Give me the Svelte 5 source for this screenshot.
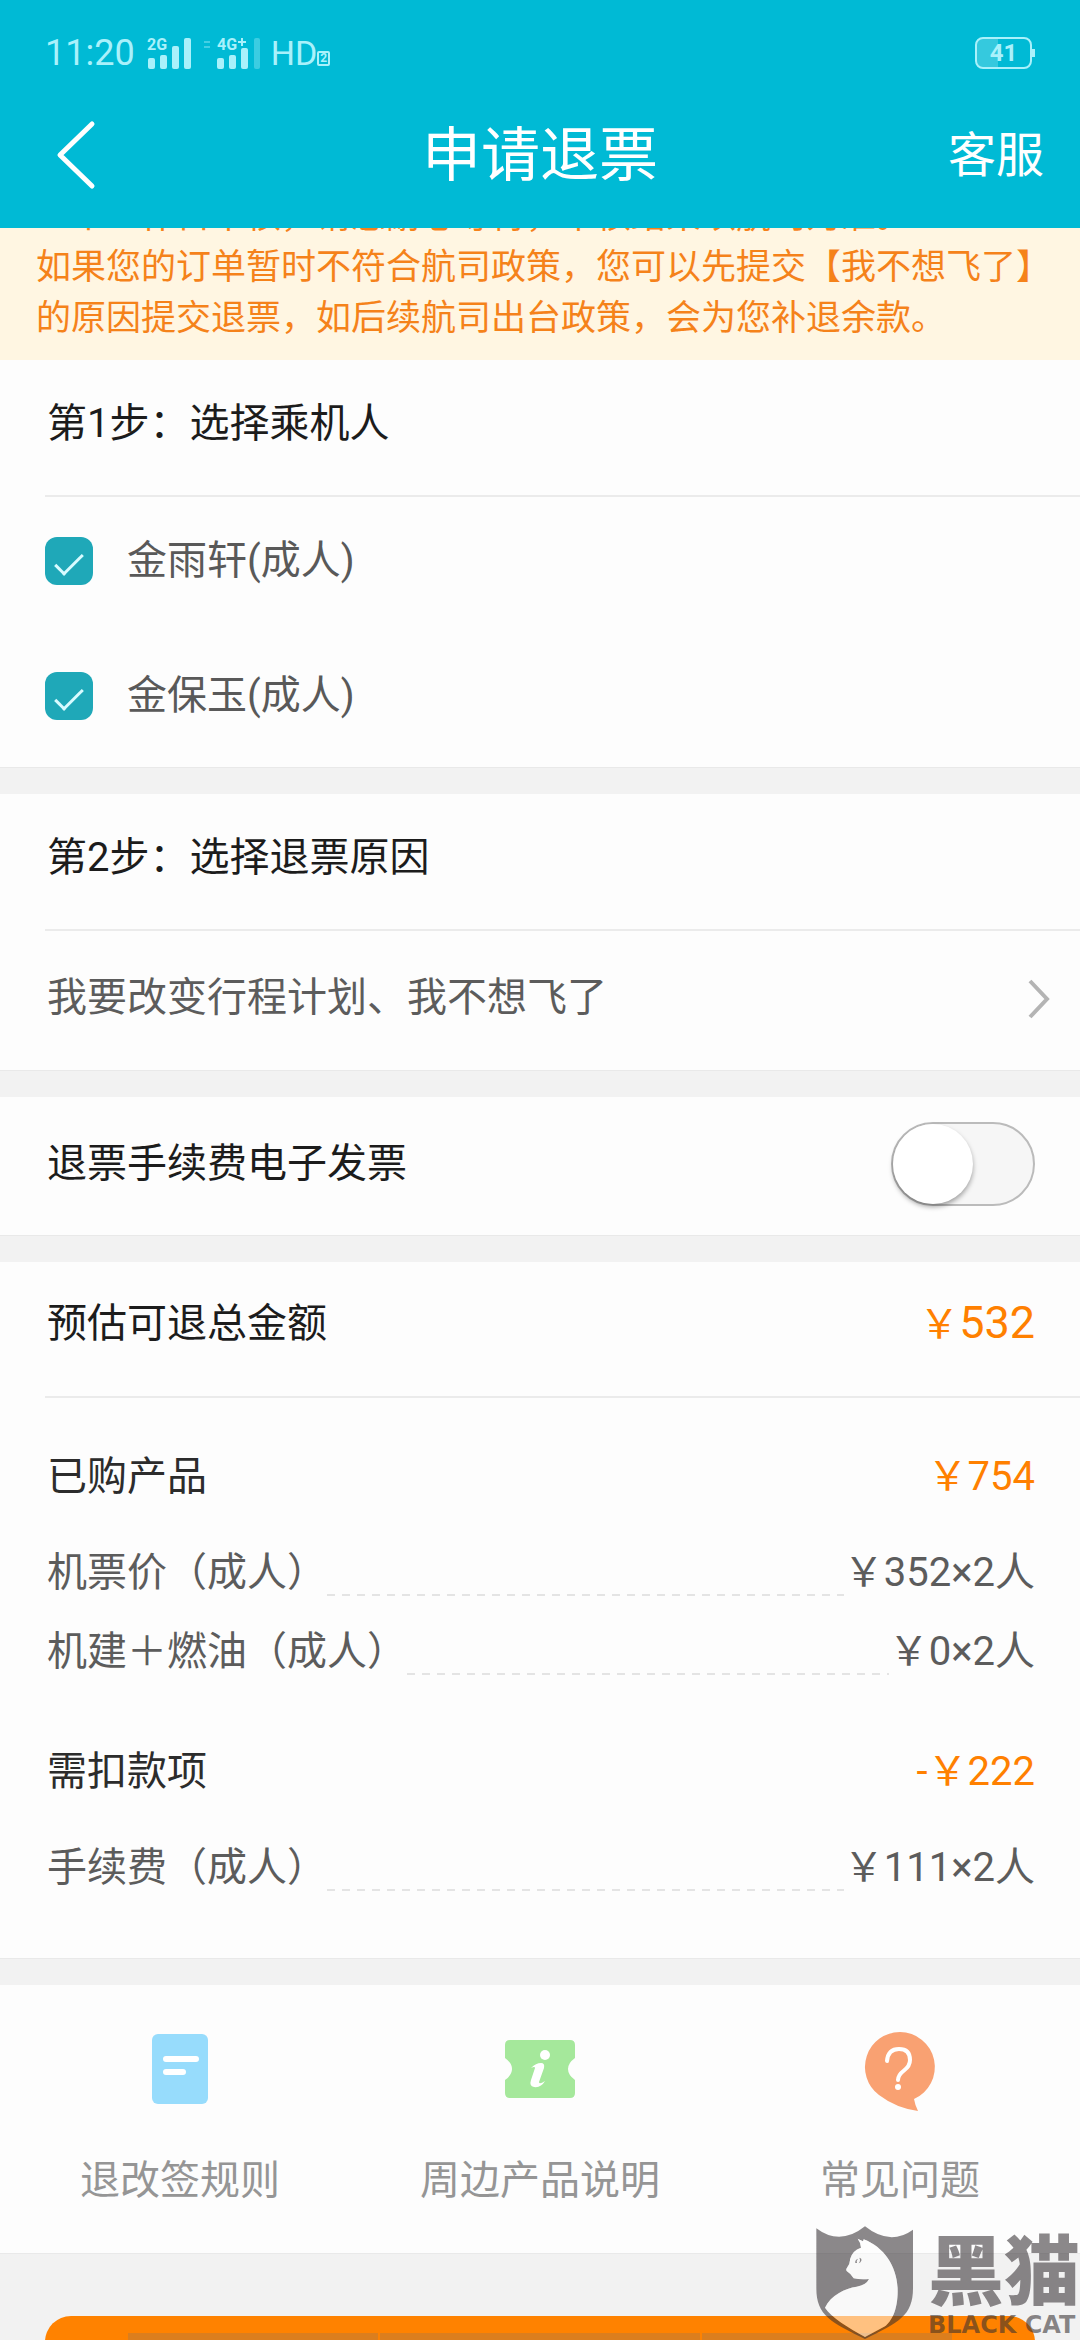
<script>
  let passengers = $state([
    { id: 'p1', name: '金雨轩(成人)', checked: true },
    { id: 'p2', name: '金保玉(成人)', checked: true }
  ]);
  let needInvoice = $state(false);

  const reason = '我要改变行程计划、我不想飞了';

  const groups = [
    {
      title: '已购产品',
      sign: '',
      total: 754,
      items: [
        { label: '机票价（成人）', price: 352, count: 2 },
        { label: '机建＋燃油（成人）', price: 0, count: 2 }
      ]
    },
    {
      title: '需扣款项',
      sign: '-',
      total: 222,
      items: [{ label: '手续费（成人）', price: 111, count: 2 }]
    }
  ];
</script>

<div class="page">
  <header class="header">
    <div class="status">
      <span class="time">11:20</span>
      <svg class="signal" width="46" height="34" viewBox="0 0 46 34" fill="currentColor">
        <text x="0" y="14" class="net">2G</text>
        <rect x="1" y="22" width="7" height="11" rx="2" />
        <rect x="13" y="19" width="7" height="14" rx="2" />
        <rect x="25" y="10" width="7" height="23" rx="2" />
        <rect x="37" y="2" width="7" height="31" rx="2" />
      </svg>
      <svg class="signal" width="58" height="34" viewBox="0 0 58 34" fill="currentColor">
        <rect x="1" y="5" width="6" height="2" opacity="0.4" />
        <rect x="1" y="10" width="6" height="2" opacity="0.4" />
        <text x="14" y="14" class="net">4G</text>
        <path d="M38 2h2v3h3v2h-3v3h-2v-3h-3v-2h3z" />
        <rect x="14" y="22" width="7" height="11" rx="2" />
        <rect x="26" y="19" width="7" height="14" rx="2" />
        <rect x="38" y="12" width="7" height="21" rx="2" />
        <rect x="51" y="2" width="6" height="31" rx="2" opacity="0.35" />
      </svg>
      <span class="hd">HD<span class="sim">2</span></span>
      <span class="battery">41</span>
    </div>
    <nav class="nav">
      <button class="back" aria-label="返回">
        <svg width="46" height="72" viewBox="0 0 46 72" fill="none" stroke="currentColor" stroke-width="5" stroke-linecap="round" stroke-linejoin="round">
          <path d="M39 4 L7 35 L39 66" />
        </svg>
      </button>
      <h1>申请退票</h1>
      <a class="service" href="#service">客服</a>
    </nav>
  </header>

  <main>
    <div class="notice">
      <p>一个工作日审核，请您耐心等待，审核结果以航司为准。</p>
      <p>如果您的订单暂时不符合航司政策，您可以先提交【我不想飞了】的原因提交退票，如后续航司出台政策，会为您补退余款。</p>
    </div>

    <section>
      <h2 class="row">第1步：选择乘机人</h2>
      <hr />
      {#each passengers as p (p.id)}
        <label class="row passenger">
          <input type="checkbox" class="check" bind:checked={p.checked} />
          <span>{p.name}</span>
        </label>
      {/each}
    </section>

    <section>
      <h2 class="row">第2步：选择退票原因</h2>
      <hr />
      <button class="row reason">
        <span>{reason}</span>
        <svg width="26" height="42" viewBox="0 0 26 42" fill="none" stroke="#b4b4b4" stroke-width="4">
          <path d="M4 4 L21 22 L4 40" />
        </svg>
      </button>
    </section>

    <section>
      <label class="invoice">
        <span>退票手续费电子发票</span>
        <input type="checkbox" role="switch" class="switch" bind:checked={needInvoice} />
      </label>
    </section>

    <section>
      <div class="row total">
        <h2>预估可退总金额</h2>
        <span class="amount">￥<span class="big">532</span></span>
      </div>
      <hr />
      <div class="detail">
        {#each groups as g}
          <div class="group">
            <div class="line head">
              <h3>{g.title}</h3>
              <span class="amount">{g.sign}￥{g.total}</span>
            </div>
            <div class="items">
              {#each g.items as item}
                <div class="line">
                  <span>{item.label}</span>
                  <i class="dash"></i>
                  <span>￥{item.price}×{item.count}人</span>
                </div>
              {/each}
            </div>
          </div>
        {/each}
      </div>
    </section>

    <section class="links">
      <a href="#rules">
        <svg width="84" height="84" viewBox="0 0 84 84">
          <rect x="14" y="7" width="56" height="70" rx="6" fill="#97dcfc" />
          <path d="M28 32h30M28 45h17" stroke="#fff" stroke-width="6" stroke-linecap="round" />
        </svg>
        <span>退改签规则</span>
      </a>
      <a href="#products">
        <svg width="84" height="84" viewBox="0 0 84 84">
          <path d="M12 13h60q5 0 5 5v13q-7 5-7 11t7 11v13q0 5-5 5H12q-5 0-5-5V53q7-5 7-11T7 31V18q0-5 5-5z" fill="#a5e89b" />
          <circle cx="47" cy="28" r="5" fill="#fff" />
          <path d="M33 41q5-5 10-5q4 0 3 5l-5 14q0 3 6-1q-4 7-11 6q-5-1-3-7l4-12q0-2-4 0z" fill="#fff" />
        </svg>
        <span>周边产品说明</span>
      </a>
      <a href="#faq">
        <svg width="84" height="84" viewBox="0 0 84 84">
          <path d="M42 5a35 35 0 0 1 14 67q1 6 4 12Q38 81 21 68A35 35 0 0 1 42 5z" fill="#f9a172" />
          <path d="M29 34q1-12 12-12q11 0 11 11q0 6-6 10.500t-6 9.500" fill="none" stroke="#fff" stroke-width="4" stroke-linecap="round" />
          <circle cx="40" cy="60" r="3" fill="#fff" />
        </svg>
        <span>常见问题</span>
      </a>
    </section>

    <button class="submit" aria-label="提交">
      <span class="strip"><i></i><i></i><i></i></span>
    </button>
  </main>

  <div class="watermark">
    <svg width="98" height="114" viewBox="93 75 294 342">
      <path class="shield" fill-rule="evenodd" d="M94 82Q165 136 240 76Q315 136 384 86V262C384 345 340 365 240 414C140 365 94 345 94 262ZM218 113L234 121L236 115C300 140 338 200 338 270C338 330 318 362 300 376L240 408C190 380 140 350 120 320C138 282 180 262 215 257Q244 252 252 234Q225 236 206 232Q200 220 185 210Q182 205 186 200Q196 187 195 175Q202 148 228 140Q228 126 218 113Z" />
      <path fill="#fff" fill-opacity="0.5" d="M218 113L234 121L236 115C300 140 338 200 338 270C338 330 318 362 300 376L240 408C190 380 140 350 120 320C138 282 180 262 215 257Q244 252 252 234Q225 236 206 232Q200 220 185 210Q182 205 186 200Q196 187 195 175Q202 148 228 140Q228 126 218 113Z" />
      <path class="shield" d="M211 186q-2-9 8-13q-6 6-3 13zM221 187q7-8 2-17q8 2 6 9q-3 7-8 8z" />
    </svg>
    <div class="brand">
      <span class="cn">黑猫</span>
      <span class="en">BLACK CAT</span>
    </div>
  </div>
</div>

<style>
  :global(body) {
    margin: 0;
  }

  .page {
    position: relative;
    display: flex;
    flex-direction: column;
    height: 100vh;
    overflow: hidden;
    background: #f2f2f2;
    color: #1c1c1c;
    font-family: Roboto, "Noto Sans CJK SC", sans-serif;
    font-size: 40px;
    line-height: 56px;
  }

  h1, h2, h3, p {
    margin: 0;
    font-size: inherit;
    font-weight: 400;
  }

  button {
    padding: 0;
    border: 0;
    background: none;
    color: inherit;
    font: inherit;
    cursor: pointer;
  }

  a {
    color: inherit;
    text-decoration: none;
  }

  .header {
    flex: none;
    padding: 33px 36px 23px 45px;
    background: #00bad5;
    color: #fff;
  }

  .status {
    display: flex;
    align-items: center;
    height: 40px;
    margin-right: 12px;
    color: #a9f1fb;
    font-size: 36px;
    line-height: 40px;
  }

  .time {
    margin-right: 12px;
  }

  .signal {
    margin-right: 10px;
    overflow: visible;
  }

  .net {
    font-size: 16px;
    font-weight: 700;
  }

  .hd {
    display: flex;
    align-items: center;
    font-size: 34px;
  }

  .sim {
    margin-top: 10px;
    padding: 0 1px;
    border: 2px solid currentColor;
    border-radius: 2px;
    font-size: 12px;
    font-weight: 700;
    line-height: 11px;
  }

  .battery {
    position: relative;
    box-sizing: border-box;
    width: 57px;
    height: 32px;
    margin-left: auto;
    border: 2px solid currentColor;
    border-radius: 8px;
    background: linear-gradient(90deg, #35c9de 40%, transparent 40%);
    font-size: 24px;
    font-weight: 700;
    line-height: 28px;
    text-align: center;
  }

  .battery::after {
    content: '';
    position: absolute;
    top: 10px;
    right: -5px;
    width: 3px;
    height: 8px;
    background: currentColor;
  }

  .nav {
    display: grid;
    grid-template-columns: 1fr auto 1fr;
    align-items: center;
    height: 98px;
    margin-top: 34px;
    margin-left: -9px;
  }

  .back {
    display: flex;
    justify-self: start;
    margin-left: 17px;
  }

  h1 {
    font-size: 59px;
  }

  .service {
    justify-self: end;
    font-size: 48px;
  }

  main {
    flex: 1;
    min-height: 0;
    overflow: hidden;
  }

  .notice {
    margin-top: -37px;
    padding: 0 28px 16px 36px;
    background: #fff6e2;
    color: #f5821a;
    font-size: 35px;
    line-height: 51px;
  }

  section {
    margin-bottom: 26px;
    border-bottom: 1px solid #e9e9e9;
    background: #fdfdfd;
  }

  hr {
    height: 2px;
    margin: 0 0 0 45px;
    border: 0;
    background: #ebebeb;
  }

  .row {
    padding: 36px 45px 43px 47px;
  }

  .passenger {
    display: flex;
    align-items: center;
    padding-left: 45px;
    gap: 34px;
    color: #595959;
  }

  .check {
    appearance: none;
    position: relative;
    width: 48px;
    height: 48px;
    margin: 0;
    border: 2px solid #ccc;
    border-radius: 12px;
  }

  .check:checked {
    border: 0;
    background: #1fa8b8;
  }

  .check:checked::before {
    content: '';
    position: absolute;
    top: 10px;
    left: 17px;
    width: 11px;
    height: 25px;
    border: solid #d8fbff;
    border-width: 0 3px 3px 0;
    transform: rotate(45deg);
  }

  .reason {
    display: flex;
    align-items: center;
    justify-content: space-between;
    width: 100%;
    padding: 39px 28px 44px 47px;
    color: #5c5c5c;
  }

  .invoice {
    display: flex;
    align-items: center;
    justify-content: space-between;
    padding: 25px 45px 29px 47px;
  }

  .switch {
    appearance: none;
    box-sizing: border-box;
    position: relative;
    width: 144px;
    height: 84px;
    margin: 0;
    border: 2px solid #bbb;
    border-radius: 42px;
    background: #f6f6f6;
  }

  .switch::before {
    content: '';
    position: absolute;
    top: 0;
    left: 0;
    width: 80px;
    height: 80px;
    border-radius: 50%;
    background: #fff;
    box-shadow: 0 3px 5px rgba(0, 0, 0, 0.35);
    transition: left 0.2s;
  }

  .switch:checked {
    background: #00bad5;
  }

  .switch:checked::before {
    left: 60px;
  }

  .total {
    display: flex;
    align-items: center;
    justify-content: space-between;
    padding: 33px 45px 43px 47px;
  }

  .amount {
    color: #ff8000;
  }

  .big {
    font-size: 45px;
  }

  .detail {
    display: flex;
    flex-direction: column;
    gap: 64px;
    padding: 51px 45px 62px 47px;
  }

  .line {
    display: flex;
    justify-content: space-between;
    color: #5c5c5c;
  }

  .head {
    margin-bottom: 40px;
    color: #2c2c2c;
  }

  .items {
    display: flex;
    flex-direction: column;
    gap: 23px;
  }

  .dash {
    flex: 1;
    align-self: flex-end;
    height: 2px;
    margin-bottom: 5px;
    background: repeating-linear-gradient(90deg, #e4e4e4 0 8px, transparent 8px 15px);
  }

  .links {
    display: grid;
    grid-template-columns: repeat(3, 1fr);
    margin-bottom: 0;
    padding: 42px 0 44px;
    color: #959595;
  }

  .links a {
    display: flex;
    flex-direction: column;
    align-items: center;
    gap: 42px;
  }

  .submit {
    display: block;
    width: calc(100% - 90px);
    height: 132px;
    margin: 62px 45px 60px;
    padding: 17px 83px 0;
    border-radius: 26px;
    background: #ff8200;
  }

  .strip {
    display: grid;
    grid-template-columns: 250px 1fr 250px;
    gap: 2px;
    height: 100%;
  }

  .strip i {
    background: #db7e1e;
  }

  .watermark {
    position: absolute;
    right: 0;
    bottom: 0;
    display: flex;
    align-items: flex-end;
    gap: 14px;
    color: rgba(50, 45, 48, 0.56);
    pointer-events: none;
  }

  .shield {
    fill: currentColor;
  }

  .brand {
    display: flex;
    flex-direction: column;
  }

  .cn {
    font-family: "Noto Sans CJK SC", sans-serif;
    font-size: 76px;
    font-weight: 900;
    line-height: 88px;
  }

  .en {
    font-family: "DejaVu Sans", sans-serif;
    font-size: 24px;
    font-weight: 700;
    line-height: 30px;
  }
</style>
